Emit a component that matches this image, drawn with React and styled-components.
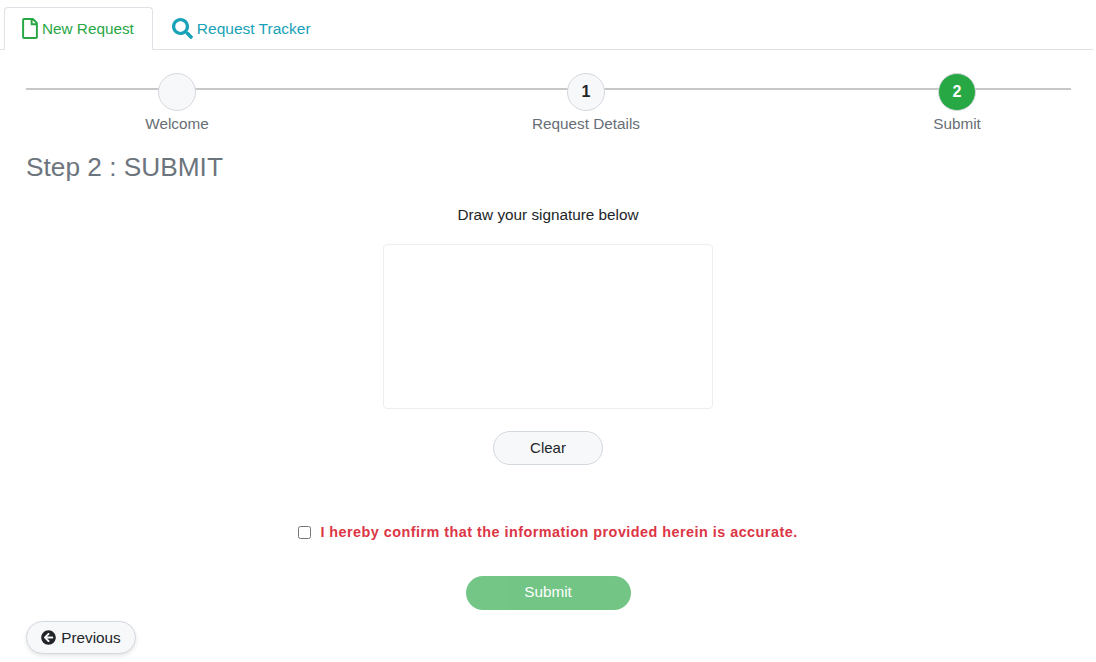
import React from 'react'
import styled, { createGlobalStyle } from 'styled-components'
import { FaRegFile, FaSearch, FaArrowCircleLeft } from 'react-icons/fa'

const GlobalStyle = createGlobalStyle`
  html, body {
    margin: 0;
    padding: 0;
    background: #fff;
    font-family: "Liberation Sans", Arial, sans-serif;
    font-size: 15.3px;
    color: #212529;
  }
`

const Page = styled.div`
  width: 1096px;
  height: 662px;
  overflow: hidden;
  padding-top: 7px;
  box-sizing: border-box;
`

const TabBar = styled.div`
  display: flex;
  height: 43px;
  box-sizing: border-box;
  margin-right: 3px;
  padding-left: 4px;
  border-bottom: 1px solid #dee2e6;
`

const Tab = styled.div`
  display: flex;
  align-items: center;
  gap: 4px;
  box-sizing: border-box;
  height: 43px;
  padding: 0 18px;
  padding-left: ${props => (props.active ? '17px' : '18px')};
  border: 1px solid ${props => (props.active ? '#dee2e6' : 'transparent')};
  border-bottom-color: ${props => (props.active ? '#fff' : 'transparent')};
  border-radius: 4px 4px 0 0;
  background: ${props => (props.active ? '#fff' : 'transparent')};
  color: ${props => (props.active ? '#28a745' : '#17a2b8')};
  font-size: ${props => (props.active ? '15.3px' : '15.5px')};
  svg {
    width: ${props => (props.active ? '16px' : '21px')};
    height: 21px;
    flex: none;
  }
`

const Stepper = styled.div`
  position: relative;
  display: grid;
  grid-template-columns: 302px 516px 226px;
  margin: 23px 25px 0 26px;
  /* the rail runs behind the circles */
  &::before {
    content: '';
    position: absolute;
    left: 0;
    right: 0;
    top: 15px;
    height: 2px;
    background: #c8c8c8;
  }
`

const Step = styled.div`
  position: relative;
  display: flex;
  flex-direction: column;
  align-items: center;
`

const Circle = styled.div`
  display: flex;
  align-items: center;
  justify-content: center;
  box-sizing: border-box;
  width: 38px;
  height: 38px;
  border-radius: 50%;
  border: 1px solid #d5d8de;
  background: ${props => (props.done ? '#28a745' : '#f7f8fa')};
  color: ${props => (props.done ? '#fff' : '#212529')};
  font-weight: 700;
  font-size: 16px;
`

const StepLabel = styled.div`
  margin-top: 4px;
  line-height: 18px;
  color: #676e75;
`

const Heading = styled.h2`
  margin: 19px 0 0 26px;
  font-size: 26.25px;
  line-height: 30px;
  font-weight: 400;
  color: #6c757d;
`

const SignatureSection = styled.div`
  display: flex;
  flex-direction: column;
  align-items: center;
  margin-top: 24px;
`

const Hint = styled.div`
  line-height: 18px;
  color: #212529;
`

const SignaturePad = styled.div`
  width: 330px;
  height: 165px;
  box-sizing: border-box;
  margin-top: 20px;
  border: 1px solid #eeeeee;
  border-radius: 4px;
  background: #fff;
`

const PillButton = styled.button`
  display: flex;
  align-items: center;
  justify-content: center;
  gap: 5px;
  box-sizing: border-box;
  width: 110px;
  height: 34px;
  padding: 0 0 2px;
  border: 1px solid #d3d7de;
  border-radius: 17px;
  background: #f7f8fa;
  color: #212529;
  font-family: inherit;
  font-size: 15px;
`

const ClearButton = styled(PillButton)`
  margin-top: 22px;
`

const Confirm = styled.label`
  display: flex;
  align-items: center;
  justify-content: center;
  margin-top: 56px;
  height: 22px;
  color: #dc3545;
  font-size: 14.4px;
  font-weight: 700;
  letter-spacing: 0.47px;
`

const CheckBox = styled.input`
  width: 13px;
  height: 13px;
  margin: 0 9px 0 0;
`

const SubmitRow = styled.div`
  display: flex;
  justify-content: center;
  margin-top: 33px;
`

const SubmitButton = styled.button`
  width: 165px;
  height: 34px;
  padding: 0 0 2px;
  border: none;
  border-radius: 17px;
  background: #28a745;
  opacity: 0.65;
  color: #fff;
  font-family: inherit;
  font-size: 15.3px;
`

const PreviousButton = styled(PillButton)`
  height: 33px;
  margin: 11px 0 0 26px;
  padding-bottom: 0;
  font-size: 15.3px;
  box-shadow: 0 2px 4px rgba(0, 0, 0, 0.1);
  svg {
    font-size: 15px;
  }
`

const steps = [
  { label: 'Welcome', value: '' },
  { label: 'Request Details', value: '1' },
  { label: 'Submit', value: '2', done: true }
]

export default function App () {
  return (
    <Page>
      <GlobalStyle />
      <TabBar>
        <Tab active><FaRegFile />New Request</Tab>
        <Tab><FaSearch />Request Tracker</Tab>
      </TabBar>

      <Stepper>
        {steps.map(step => (
          <Step key={step.label}>
            <Circle done={step.done}>{step.value}</Circle>
            <StepLabel>{step.label}</StepLabel>
          </Step>
        ))}
      </Stepper>

      <Heading>Step 2 : SUBMIT</Heading>

      <SignatureSection>
        <Hint>Draw your signature below</Hint>
        <SignaturePad />
        <ClearButton>Clear</ClearButton>
      </SignatureSection>

      <Confirm>
        <CheckBox type='checkbox' />
        I hereby confirm that the information provided herein is accurate.
      </Confirm>

      <SubmitRow>
        <SubmitButton>Submit</SubmitButton>
      </SubmitRow>

      <PreviousButton><FaArrowCircleLeft />Previous</PreviousButton>
    </Page>
  )
}
